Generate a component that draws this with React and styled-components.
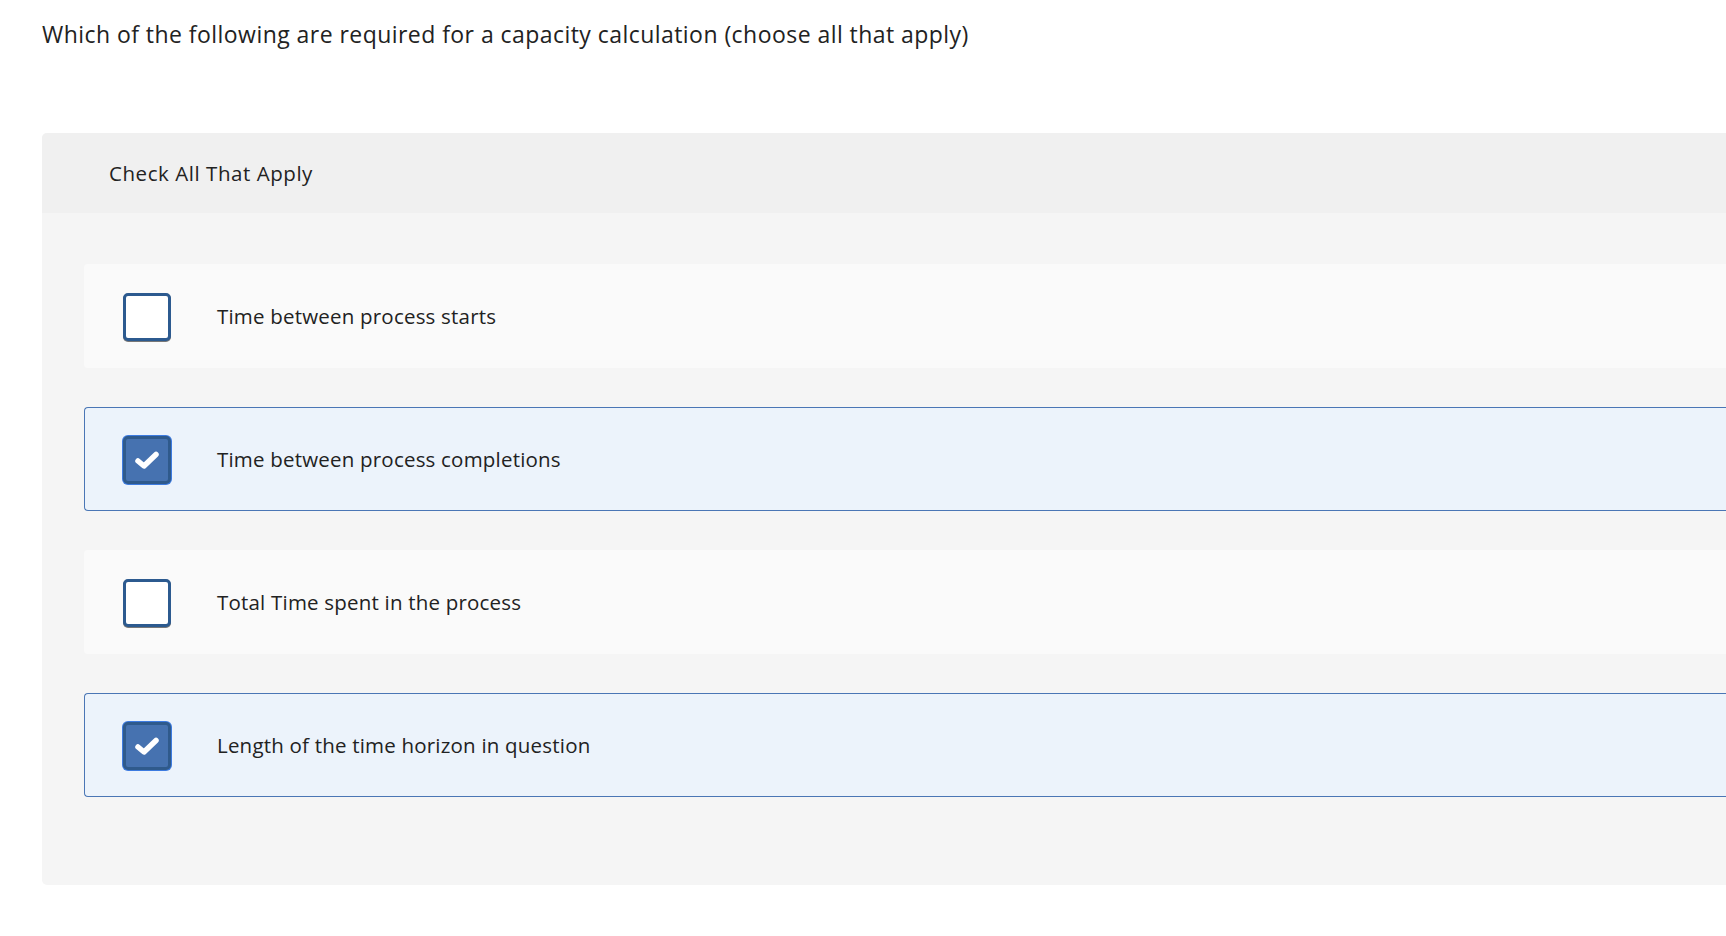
import React, { useState } from "react";
import styled, { createGlobalStyle } from "styled-components";

const GlobalStyle = createGlobalStyle`
  html, body {
    margin: 0;
    padding: 0;
    background: #ffffff;
    overflow: hidden;
  }
  body {
    font-family: "Open Sans", "Lato", sans-serif;
    color: #222222;
  }
`;

const options = [
  { id: 1, label: "Time between process starts", checked: false },
  { id: 2, label: "Time between process completions", checked: true },
  { id: 3, label: "Total Time spent in the process", checked: false },
  { id: 4, label: "Length of the time horizon in question", checked: true },
];

const App = () => {
  const [items, setItems] = useState(options);

  const toggle = (id) => {
    setItems(items.map((it) => (it.id === id ? { ...it, checked: !it.checked } : it)));
  };

  return (
    <Page>
      <GlobalStyle />
      <Question>
        Which of the following are required for a capacity calculation (choose all that apply)
      </Question>
      <Panel>
        <PanelHeader>Check All That Apply</PanelHeader>
        <OptionList>
          {items.map((it) => (
            <Option key={it.id} selected={it.checked} onClick={() => toggle(it.id)}>
              <Box checked={it.checked}>
                {it.checked && (
                  <svg width="26" height="21" viewBox="0 0 26 21">
                    <path
                      d="M4 11 L10 16 L22 4.5"
                      fill="none"
                      stroke="#ffffff"
                      strokeWidth="5.5"
                      strokeLinecap="round"
                      strokeLinejoin="round"
                    />
                  </svg>
                )}
              </Box>
              <Label>{it.label}</Label>
            </Option>
          ))}
        </OptionList>
      </Panel>
    </Page>
  );
};

const Page = styled.div`
  width: 100%;
  min-height: 100vh;
  padding-top: 20px;
  box-sizing: border-box;
`;

const Question = styled.div`
  padding-left: 42px;
  font-size: 23px;
  letter-spacing: 0.45px;
  line-height: 28px;
  color: #222222;
  margin-bottom: 85px;
`;

const Panel = styled.div`
  margin-left: 42px;
  width: calc(100vw - 32px);
  background: #f5f5f5;
  border-radius: 5px;
  overflow: hidden;
`;

const PanelHeader = styled.div`
  height: 80px;
  display: flex;
  align-items: center;
  padding-left: 67px;
  background: #f0f0f0;
  font-size: 20.5px;
  letter-spacing: 0.55px;
  color: #222222;
`;

const OptionList = styled.div`
  display: flex;
  flex-direction: column;
  gap: 39px;
  padding: 51px 0 88px 42px;
`;

const Option = styled.div`
  height: 104px;
  box-sizing: border-box;
  display: flex;
  align-items: center;
  padding-left: 38px;
  border: 1px solid ${(p) => (p.selected ? "#4a76b5" : "transparent")};
  border-right: none;
  border-radius: 4px 0 0 4px;
  background: ${(p) => (p.selected ? "#ecf3fb" : "#fafafa")};
  cursor: pointer;
`;

const Box = styled.div`
  width: 48px;
  height: 48px;
  box-sizing: border-box;
  flex-shrink: 0;
  margin-top: 2px;
  display: flex;
  align-items: center;
  justify-content: center;
  border: 3px solid ${(p) => (p.checked ? "#2f5a8c" : "#2c5a8f")};
  border-radius: 5px;
  background: ${(p) => (p.checked ? "#4672b0" : "#ffffff")};
  box-shadow: ${(p) => (p.checked ? "0 0 0 1px #3d7be0" : "0 1px 0 #777777")};
`;

const Label = styled.span`
  margin-left: 46px;
  font-size: 20.5px;
  letter-spacing: 0.2px;
  color: #222222;
`;

export default App;
